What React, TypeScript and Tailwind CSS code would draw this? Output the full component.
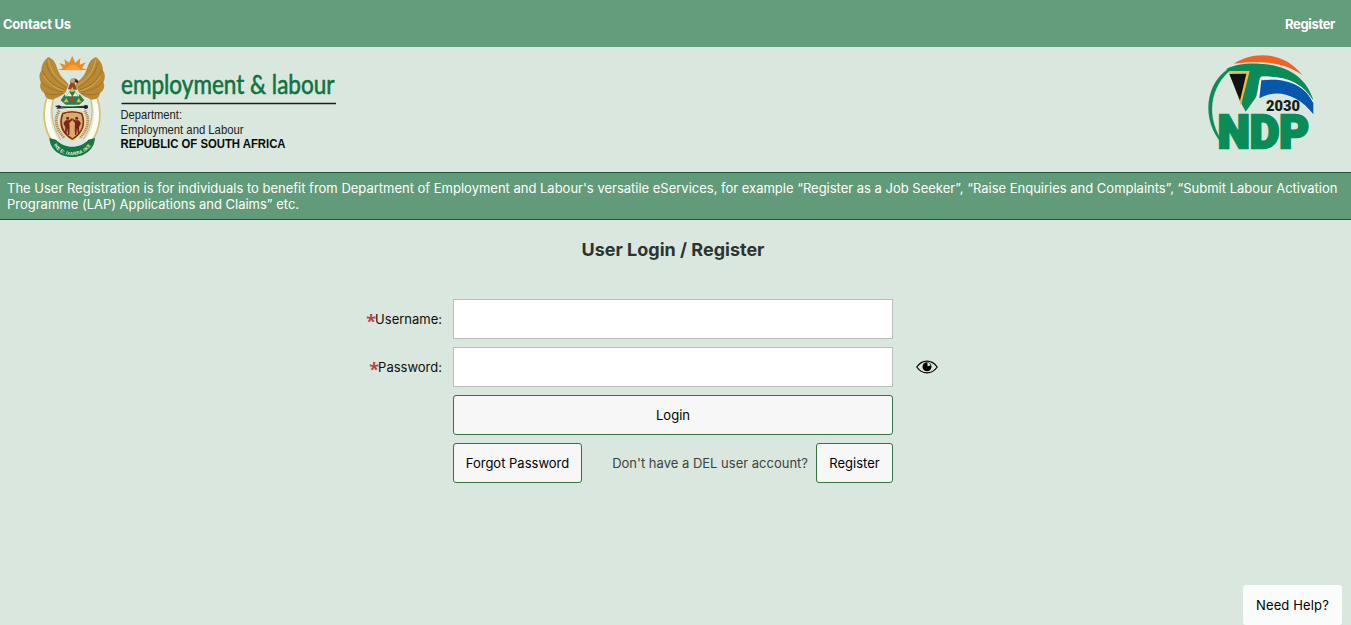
import { useState } from 'react';
import type { ReactNode } from 'react';

function CoatOfArms() {
  return (
    <svg viewBox="0 0 270 360" className="h-[120px] w-[90px] shrink-0">
      {/* Rising sun */}
      <path
        d="M83 66 L99 61 L88 45 L106 51 L103 33 L117 44 L127 24 L136 44 L151 31 L149 50 L168 43 L156 60 L173 66 Z"
        fill="#ee8a24"
      />
      <path d="M104 67 Q128 34 154 67 Z" fill="#f6a13a" />
      {/* Elephant tusks and wheat */}
      <path d="M62 143 C43 190 51 238 79 282" fill="none" stroke="#fdfcf0" strokeWidth="17" />
      <path d="M190 143 C209 190 201 238 173 282" fill="none" stroke="#fdfcf0" strokeWidth="17" />
      <path d="M54 140 C34 190 40 245 70 285" fill="none" stroke="#d9bf78" strokeWidth="5" />
      <path d="M198 140 C218 190 212 245 182 285" fill="none" stroke="#d9bf78" strokeWidth="5" />
      <path d="M74 142 C59 180 64 232 92 274" fill="none" stroke="#d3b566" strokeWidth="3" />
      <path d="M178 142 C193 180 188 232 160 274" fill="none" stroke="#d3b566" strokeWidth="3" />
      <path d="M88 188 C70 215 79 245 104 270" fill="none" stroke="#b58c5c" strokeWidth="9" strokeDasharray="4 2" />
      <path d="M164 188 C182 215 173 245 148 270" fill="none" stroke="#b58c5c" strokeWidth="9" strokeDasharray="4 2" />
      {/* Wings */}
      <path
        d="M55 27 C76 35 79 54 86 72 C94 91 112 100 116 111 L107 132 C96 145 79 149 68 155 C51 154 44 146 43 135 C31 126 27 113 33 104 C27 91 27 76 34 68 C34 50 43 36 55 27 Z"
        fill="#b98a35"
      />
      <path
        d="M198 27 C177 35 174 54 167 72 C159 91 141 100 137 111 L146 132 C157 145 174 149 185 155 C202 154 209 146 210 135 C222 126 226 113 220 104 C226 91 226 76 219 68 C219 50 210 36 198 27 Z"
        fill="#b98a35"
      />
      <g fill="none" stroke="#9b6b27" strokeWidth="2.5">
        <path d="M49 43 C55 78 79 101 108 119" />
        <path d="M37 66 C48 97 76 117 104 125" />
        <path d="M34 102 C53 121 77 130 100 131" />
        <path d="M44 134 C62 143 81 141 98 135" />
        <path d="M204 43 C198 78 174 101 145 119" />
        <path d="M216 66 C205 97 177 117 149 125" />
        <path d="M219 102 C200 121 176 130 153 131" />
        <path d="M209 134 C191 143 172 141 155 135" />
      </g>
      <g fill="none" stroke="#dfb968" strokeWidth="2">
        <path d="M55 34 C62 73 84 95 112 113" />
        <path d="M41 83 C54 108 78 122 101 128" />
        <path d="M198 34 C191 73 169 95 141 113" />
        <path d="M212 83 C199 108 175 122 152 128" />
      </g>
      {/* Secretary bird */}
      <path d="M114 124 C117 112 123 105 121 101 C122 91 139 88 144 98 L143 104 L133 103 C135 111 140 117 141 125 Z" fill="#8c4a22" />
      <circle cx="128" cy="98" r="7" fill="#c4a06b" />
      <path d="M136 95 L146 99 L143 105 L135 101 Z" fill="#372018" />
      {/* Protea */}
      <path d="M127 116 L151 155 L127 168 L103 155 Z" fill="#20804d" />
      <path d="M92 157 L104 139 L114 160 L126 139 L138 160 L149 139 L163 157 L148 170 H107 Z" fill="#22834e" />
      <path d="M127 117 L135 131 H119 Z" fill="#e9b33c" />
      <path d="M118 132 L126 145 H110 Z M136 132 L144 145 H128 Z" fill="#f7eed2" />
      <path d="M127 144 L135 160 H119 Z" fill="#c63a2b" />
      <path d="M109 150 L116 163 H101 Z M146 150 L154 163 H139 Z" fill="#e9b33c" />
      {/* Spear and knobkierie */}
      <path d="M80 176 L174 179 M80 181 L174 174" stroke="#292923" strokeWidth="3" />
      <path d="M74 174 L89 172 L94 177 L88 181 Z" fill="#202020" />
      <circle cx="167" cy="177" r="6" fill="#202020" />
      {/* Shield */}
      <path d="M94 193 Q126 181 159 193 C172 224 166 257 127 279 C88 257 82 224 94 193 Z" fill="#843321" stroke="#efdc9c" strokeWidth="5" />
      <path d="M99 197 Q126 187 154 197 C165 225 160 251 127 272 C94 251 89 225 99 197 Z" fill="#dcab6c" stroke="#74311f" strokeWidth="3" />
      <g fill="#7c2419">
        <circle cx="113" cy="211" r="4.5" />
        <circle cx="140" cy="211" r="4.5" />
        <path d="M107 217 L118 217 L126 211 L127 216 L118 225 L119 240 L118 261 L114 261 L112 240 L109 259 L105 257 L106 238 L100 226 Z" />
        <path d="M146 217 L135 217 L128 211 L127 216 L135 225 L134 240 L135 261 L139 261 L141 240 L144 259 L148 257 L147 238 L153 226 Z" />
      </g>
      {/* Motto ribbon */}
      <path d="M58 270 L78 275 C103 303 151 303 175 275 L195 270 C191 346 63 346 58 270 Z" fill="#157746" />
      <path id="motto" d="M69 286 C88 334 164 334 188 284" fill="none" />
      <text fill="#e3efcf" fontSize="14" className="font-['Liberation_Sans'] font-bold">
        <textPath href="#motto" startOffset="4" textLength="134">!KE E: /XARRA //KE</textPath>
      </text>
    </svg>
  );
}

function DepartmentName() {
  return (
    <svg viewBox="0 0 240 100" className="h-[100px] w-[240px] shrink-0 overflow-visible">
      <text x="11" y="34" fontSize="27.5" textLength="213.5" lengthAdjust="spacingAndGlyphs" fill="#0d7440" stroke="#0d7440" strokeWidth="0.6" className="font-['Lato',sans-serif]">
        employment &amp; labour
      </text>
      <path d="M11.5 43.5 H226" stroke="#142019" strokeWidth="1.5" />
      <g fill="#1d2320" className="font-['Liberation_Sans',sans-serif]">
        <text x="10.5" y="59" fontSize="13" textLength="61.5" lengthAdjust="spacingAndGlyphs">Department:</text>
        <text x="10.5" y="73.5" fontSize="13" textLength="123" lengthAdjust="spacingAndGlyphs">Employment and Labour</text>
        <text x="10.5" y="88" fontSize="13.5" fontWeight="700" textLength="165" lengthAdjust="spacingAndGlyphs" fill="#080c0a">
          REPUBLIC OF SOUTH AFRICA
        </text>
      </g>
    </svg>
  );
}

function NdpLogo() {
  return (
    <svg viewBox="0 0 390 336" className="h-[112px] w-[130px] shrink-0 overflow-visible">
      <path d="M116 47 C175 8 266 9 323 82 C267 43 205 37 116 47 Z" fill="#f26322" />
      {/* Ring on the left side */}
      <path d="M98 64 C21 118 22 239 98 304 L98 299 C34 232 35 130 102 70 Z" fill="#098c57" stroke="#098c57" strokeWidth="1" />
      {/* Green band of the flag */}
      <path
        d="M94 63 C122 47 158 45 194 47 C271 50 333 86 353 151 L355 166 C320 111 273 83 199 85 C187 107 190 135 181 151 L152 191 L137 163 L162 72 L101 73 Z"
        fill="#098c57"
      />
      <path d="M101 69 L164 69 L138 172 Z" fill="#f6b83e" />
      <path d="M103 78 L154 77 L135 158 Z" fill="#111313" />
      <path d="M188 153 L197 91 C261 84 319 101 354 162" fill="none" stroke="#fff" strokeWidth="5" />
      <path d="M199 97 C268 88 331 108 355 166 V199 C313 143 248 119 193 151 Z" fill="#0757ad" />
      <g className="font-['Roboto',sans-serif]">
        <text x="213" y="190" fontSize="43" fontWeight="900" textLength="102" lengthAdjust="spacingAndGlyphs" fill="#171b1a">
          2030
        </text>
        <text x="68" y="301" fontSize="138" fontWeight="900" textLength="274" lengthAdjust="spacingAndGlyphs" fill="#098c57" stroke="#098c57" strokeWidth="8">
          NDP
        </text>
      </g>
    </svg>
  );
}

function EyeIcon() {
  return (
    <svg viewBox="0 0 22 14" className="h-[14px] w-[22px]">
      <path d="M0.8 7 C6 -0.8 16 -0.8 21.2 7 C16 14.8 6 14.8 0.8 7 Z" fill="none" stroke="#000" strokeWidth="1.2" />
      <circle cx="11" cy="6.8" r="4.5" fill="#000" />
      <path d="M11.3 2.6 A4 4 0 0 1 14.6 5.4 L11.6 6.2 Z" fill="#d9e7de" />
    </svg>
  );
}

function FieldLabel({ htmlFor, children }: { htmlFor: string; children: ReactNode }) {
  return (
    <label htmlFor={htmlFor} className="flex items-center justify-end pt-0.5 pr-[11px] text-[13px] text-[#0d100e]">
      <span className="h-[18px] font-['Open_Sans'] text-lg leading-5 font-bold text-[#b84444]">*</span>
      <span className="-ml-px">{children}</span>
    </label>
  );
}

const inputClass = 'h-10 w-full border border-[#b9bfbb] bg-white px-3 text-sm outline-none';
const buttonClass = 'h-10 rounded-[3px] border border-[#33753e] bg-[#f7f7f7] pt-0.5 text-[13px] text-black';

export default function App() {
  const [showPassword, setShowPassword] = useState(false);

  return (
    <div className="flex h-[625px] w-full flex-col overflow-hidden bg-[#d9e7de] font-['Inter','Liberation_Sans',sans-serif]">
      {/* Top bar */}
      <nav className="flex h-[47px] shrink-0 items-center justify-between bg-[#639d7b] pt-0.5 pr-4 pl-[3px] text-[13px] font-bold text-white">
        <a href="#contact" className="tracking-[-0.25px]">Contact Us</a>
        <a href="#register" className="tracking-[-0.35px]">Register</a>
      </nav>

      {/* Logos */}
      <header className="flex h-[125px] shrink-0 justify-between pt-px pr-[26px] pl-[30px]">
        <div className="flex">
          <CoatOfArms />
          <div className="-ml-2.5 pt-3">
            <DepartmentName />
          </div>
        </div>
        <NdpLogo />
      </header>

      <div className="h-12 shrink-0 border-y border-[#155833] bg-[#629b79] px-[7px] pt-[7px] text-[13px] leading-4 text-white">
        <p className="tracking-[-0.006px] whitespace-nowrap">
          The User Registration is for individuals to benefit from Department of Employment and Labour's versatile eServices, for example “Register as a Job Seeker”, “Raise Enquiries and Complaints”, “Submit Labour Activation
          <br />
          Programme (LAP) Applications and Claims” etc.
        </p>
      </div>

      {/* Login form */}
      <main className="flex flex-1 flex-col pl-[253px]">
        <h1 className="mt-[18px] w-[840px] text-center text-[18px] leading-6 font-bold text-[#2d3430]">
          User Login / Register
        </h1>
        <form className="mt-[37px] grid grid-cols-[200px_440px_60px] gap-y-2" onSubmit={(e) => e.preventDefault()}>
          <FieldLabel htmlFor="username">Username:</FieldLabel>
          <input id="username" className={inputClass} />
          <span />

          <FieldLabel htmlFor="password">Password:</FieldLabel>
          <input id="password" type={showPassword ? 'text' : 'password'} className={inputClass} />
          <button
            type="button"
            aria-label="Show password"
            className="flex items-center pl-[23px]"
            onClick={() => setShowPassword(!showPassword)}
          >
            <EyeIcon />
          </button>

          <button type="submit" className={`${buttonClass} col-start-2`}>Login</button>

          <div className="col-start-2 flex items-center">
            <button type="button" className={`${buttonClass} w-[129px]`}>Forgot Password</button>
            <span className="ml-auto pt-0.5 text-[13px] whitespace-nowrap text-[#3b443f]">Don't have a DEL user account?</span>
            <button type="button" className={`${buttonClass} ml-2 w-[77px]`}>Register</button>
          </div>
        </form>
        <button
          type="button"
          className="mt-auto mr-[9px] h-10 w-[99px] self-end rounded-[3px] bg-[#fafcfb] pt-0.5 text-[13px] tracking-[0.15px] text-black"
        >
          Need Help?
        </button>
      </main>
    </div>
  );
}
